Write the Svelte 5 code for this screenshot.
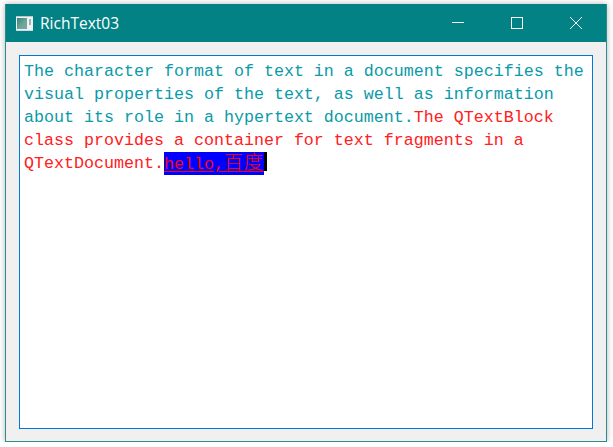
<script>
  const title = "RichText03";
</script>

<div class="window">
  <div class="titlebar">
    <svg class="app-icon" width="17" height="15" viewBox="0 0 17 15">
      <defs>
        <linearGradient id="pic" x1="0" y1="0" x2="1" y2="1">
          <stop offset="0" stop-color="#2f7f93" />
          <stop offset="0.55" stop-color="#6aa88a" />
          <stop offset="1" stop-color="#7f9fc4" />
        </linearGradient>
      </defs>
      <rect x="0" y="0" width="17" height="15" fill="#eef2f2" />
      <rect x="0" y="0" width="17" height="1" fill="#b9c9c9" />
      <rect x="1" y="2" width="10" height="11" fill="url(#pic)" />
      <rect x="13" y="3" width="2" height="6" fill="#9db5b5" />
      <rect x="0" y="14" width="17" height="1" fill="#cfdcdc" />
    </svg>
    <span class="title">{title}</span>
    <div class="controls">
      <button aria-label="Minimize">
        <svg width="12" height="12" viewBox="0 0 12 12"><path d="M0 5.5H12" stroke="#fff" fill="none" /></svg>
      </button>
      <button aria-label="Maximize">
        <svg width="12" height="12" viewBox="0 0 12 12"><rect x="0.5" y="0.5" width="11" height="11" stroke="#fff" fill="none" /></svg>
      </button>
      <button aria-label="Close">
        <svg width="12" height="12" viewBox="0 0 12 12"><path d="M0 0L12 12M12 0L0 12" stroke="#fff" fill="none" /></svg>
      </button>
    </div>
  </div>
  <div class="client">
    <div class="editor">
      <span class="teal">The character format of text in a document specifies the visual properties of the text, as well as information about its role in a hypertext document.</span><span class="red">The QTextBlock class provides a container for text fragments in a QTextDocument.</span><span class="link">hello,<span class="cjk">百度</span></span><span class="caret"></span>
    </div>
  </div>
</div>

<style>
  :global(body) {
    margin: 0;
    background: #fff;
    font-family: "Liberation Sans", sans-serif;
  }
  .window {
    width: 602px;
    height: 438px;
    margin: 4px 0 0 5px;
    box-sizing: border-box;
    border: 1px solid #2e8b8b;
    border-top: 0;
    background: #f0f0f0;
    display: flex;
    flex-direction: column;
    box-shadow: 0 0 6px rgba(0, 0, 0, 0.3);
  }
  .titlebar {
    height: 38px;
    background: #028284;
    display: flex;
    align-items: center;
    padding-left: 10px;
    color: #fff;
    flex: none;
  }
  .app-icon {
    flex: none;
  }
  .title {
    font-family: "Open Sans", "Noto Sans", sans-serif;
    font-size: 15.5px;
    margin-left: 7px;
  }
  .controls {
    margin-left: auto;
    margin-right: 1px;
    display: flex;
  }
  .controls button {
    width: 59px;
    height: 38px;
    padding: 0;
    border: 0;
    background: none;
    display: flex;
    align-items: center;
    justify-content: center;
  }
  .client {
    flex: 1;
    padding: 13px 13px 12px;
    display: flex;
  }
  .editor {
    flex: 1;
    box-sizing: border-box;
    border: 1px solid #0078d7;
    background: #fff;
    padding: 4px;
    font-family: "Liberation Mono", "Noto Sans CJK SC", monospace;
    font-size: 16.67px;
    line-height: 23px;
  }
  .teal {
    color: #0a9aa8;
  }
  .red {
    color: #ff2020;
  }
  .link {
    display: inline-block;
    height: 23px;
    vertical-align: top;
    background: #0000ff;
    color: #ff0000;
    text-decoration: underline;
    text-underline-offset: 2px;
  }
  .cjk {
    font-family: "Noto Sans CJK SC", sans-serif;
    font-size: 19px;
    font-weight: 300;
    letter-spacing: 1px;
    line-height: 18px;
  }
  .caret {
    display: inline-block;
    width: 3px;
    height: 19px;
    vertical-align: top;
    background: #000;
  }
</style>
